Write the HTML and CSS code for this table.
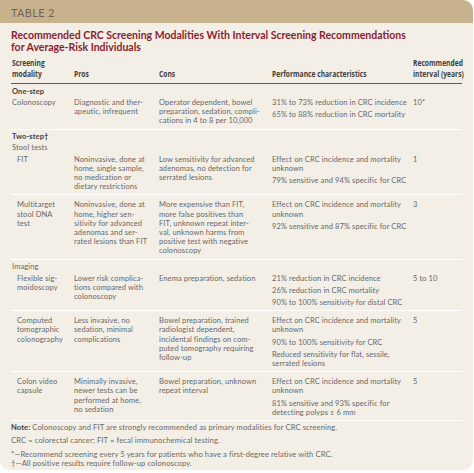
FILE: index.html
```html
<!DOCTYPE html>
<html>
<head>
<meta charset="utf-8">
<link rel="stylesheet" href="styles.css">
</head>
<body>
<div class="card">
  <div class="band">TABLE 2</div>
  <h1 class="title">Recommended CRC Screening Modalities With Interval Screening Recommendations<br>for Average-Risk Individuals</h1>
  <table class="tbl">
    <colgroup>
      <col class="c1"><col class="c2"><col class="c3"><col class="c4"><col class="c5">
    </colgroup>
    <thead>
      <tr><th><span class="h">Screening<br>modality</span></th><th><span class="h">Pros</span></th><th><span class="h">Cons</span></th><th><span class="h">Performance characteristics</span></th><th><span class="h">Recommended<br>interval (years)</span></th></tr>
    </thead>
    <tbody>
      <tr class="grp first"><td class="bold" colspan="5">One-step</td></tr>
      <tr class="row after"><td>Colonoscopy</td><td>Diagnostic and ther-<br>apeutic, infrequent</td><td>Operator dependent, bowel<br>preparation, sedation, compli-<br>cations in 4 to 8 per 10,000</td><td><p>31% to 73% reduction in CRC incidence</p><p>65% to 88% reduction in CRC mortality</p></td><td>10*</td></tr>
      <tr class="grp"><td class="bold" colspan="5">Two-step†</td></tr>
      <tr class="grp sub"><td colspan="5">Stool tests</td></tr>
      <tr class="row after"><td class="ind">FIT</td><td>Noninvasive, done at<br>home, single sample,<br>no medication or<br>dietary restrictions</td><td>Low sensitivity for advanced<br>adenomas, no detection for<br>serrated lesions</td><td><p>Effect on CRC incidence and mortality<br>unknown</p><p>79% sensitive and 94% specific for CRC</p></td><td>1</td></tr>
      <tr class="row"><td class="ind">Multitarget<br>stool DNA<br>test</td><td>Noninvasive, done at<br>home, higher sen-<br>sitivity for advanced<br>adenomas and ser-<br>rated lesions than FIT</td><td>More expensive than FIT,<br>more false positives than<br>FIT, unknown repeat inter-<br>val, unknown harms from<br>positive test with negative<br>colonoscopy</td><td><p>Effect on CRC incidence and mortality<br>unknown</p><p>92% sensitive and 87% specific for CRC</p></td><td>3</td></tr>
      <tr class="grp"><td colspan="5">Imaging</td></tr>
      <tr class="row after"><td class="ind">Flexible sig-<br>moidoscopy</td><td>Lower risk complica-<br>tions compared with<br>colonoscopy</td><td>Enema preparation, sedation</td><td><p>21% reduction in CRC incidence</p><p>26% reduction in CRC mortality</p><p>90% to 100% sensitivity for distal CRC</p></td><td>5 to 10</td></tr>
      <tr class="row"><td class="ind">Computed<br>tomographic<br>colonography</td><td>Less invasive, no<br>sedation, minimal<br>complications</td><td>Bowel preparation, trained<br>radiologist dependent,<br>incidental findings on com-<br>puted tomography requiring<br>follow-up</td><td><p>Effect on CRC incidence and mortality<br>unknown</p><p>90% to 100% sensitivity for CRC</p><p>Reduced sensitivity for flat, sessile,<br>serrated lesions</p></td><td>5</td></tr>
      <tr class="row"><td class="ind">Colon video<br>capsule</td><td>Minimally invasive,<br>newer tests can be<br>performed at home,<br>no sedation</td><td>Bowel preparation, unknown<br>repeat interval</td><td><p>Effect on CRC incidence and mortality<br>unknown</p><p>81% sensitive and 93% specific for<br>detecting polyps ≥ 6 mm</p></td><td>5</td></tr>
    </tbody>
  </table>
  <div class="notes">
    <p><b>Note:</b> Colonoscopy and FIT are strongly recommended as primary modalities for CRC screening.</p>
    <p>CRC = colorectal cancer; FIT = fecal immunochemical testing.</p>
    <p class="fn">*—Recommend screening every 5 years for patients who have a first-degree relative with CRC.<br>†—All positive results require follow-up colonoscopy.</p>
  </div>
</div>
</body>
</html>
```
FILE: styles.css
```css
html, body { margin: 0; padding: 0; background: #ffffff; }
body { font-family: Lato, "Open Sans", sans-serif; }
.card {
  width: 473px;
  height: 470px;
  background: #f3efe6;
  border-radius: 0 10px 10px 10px;
  overflow: hidden;
}
.band {
  height: 23px;
  background: #c8b28d;
  color: #6b6357;
  font-size: 11px;
  line-height: 26px;
  padding-left: 11px;
  letter-spacing: 0.3px;
}
.title {
  margin: 6px 0 0 11px;
  font-size: 10.5px;
  line-height: 12px;
  font-weight: 700;
  color: #8b1d2d;
  white-space: nowrap;
}
.tbl {
  margin: 4.5px 0 0 11px;
  width: 451px;
  table-layout: fixed;
  border-collapse: collapse;
  font-size: 7.5px;
  letter-spacing: 0.1px;
  line-height: 9.2px;
  color: #67676a;
  white-space: nowrap;
}
.c1 { width: 63px; }
.c2 { width: 85px; }
.c3 { width: 113px; }
.c4 { width: 141px; }
.c5 { width: 49px; }
.tbl th {
  font-family: "Open Sans", sans-serif;
  font-weight: 700;
  font-size: 8.6px;
  letter-spacing: 0;
  line-height: 11px;
  color: #3f3f3f;
  text-align: left;
  vertical-align: bottom;
  padding: 0 0 3px 0;
  border-bottom: 1px solid #5a5a58;
}
.tbl th:first-child { padding-left: 1px; }
.h {
  display: inline-block;
  transform: scaleX(0.78);
  transform-origin: left bottom;
}
.tbl td {
  vertical-align: top;
  padding: 5px 0 3px 0;
}
.tbl td p { margin: 0; }
.tbl td p + p { margin-top: 3px; }
.tbl tr.row td { border-bottom: 1px solid #ffffff; }
.tbl tr.row.after td { padding-top: 1.5px; }
.tbl tr.grp td { padding: 0 0 0 1px; line-height: 11px; }
.tbl tr.grp.first td { padding-top: 2px; }
.tbl tr.row + tr.grp td { padding-top: 1.5px; }
.tbl td.bold { font-weight: 700; color: #3f3f3f; }
.tbl td:first-child { padding-left: 1px; }
.tbl td.ind { padding-left: 6px; }
.notes {
  margin: 2px 0 0 11px;
  font-size: 7.6px;
  letter-spacing: 0.1px;
  line-height: 8.5px;
  color: #6a6a66;
  white-space: nowrap;
}
.notes p { margin: 0 0 4px 0; }
.notes p + p.fn { margin-top: 6px; }
.notes b { color: #3f3f3f; letter-spacing: 0.1px; }
```
